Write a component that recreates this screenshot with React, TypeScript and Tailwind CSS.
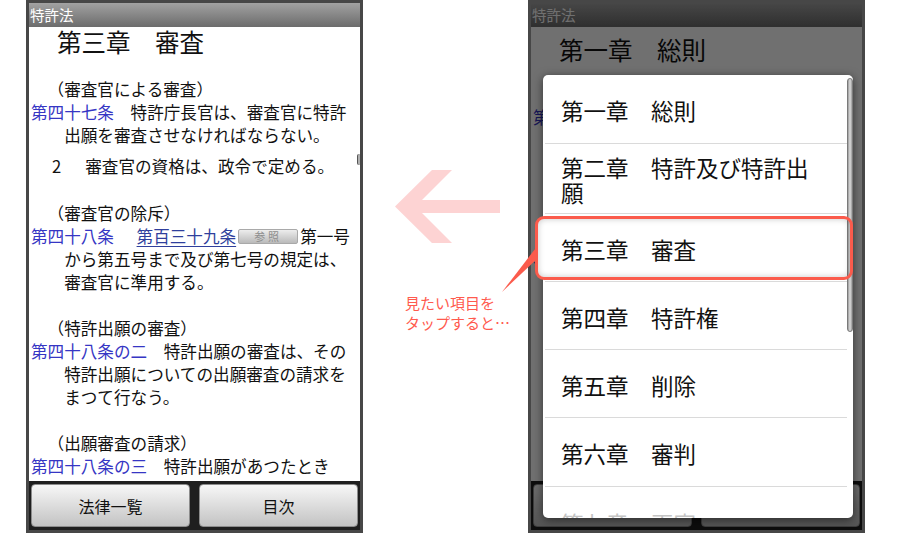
import React from 'react';

const linkBlue = 'text-[#3636c4]';

function TitleBar() {
  return (
    <div className="h-[24px] shrink-0 bg-gradient-to-b from-[#a2a2a2] to-[#6c6c6c] pl-[1px] text-[14.5px] leading-[24px] text-white">
      特許法
    </div>
  );
}

function BottomBar() {
  const btn =
    'flex flex-1 items-center justify-center rounded-[4px] border border-[#8c8c8c] bg-gradient-to-b from-[#f7f7f7] to-[#c3c3c3] text-[16px] text-[#111]';
  return (
    <div className="flex h-[49px] shrink-0 gap-[9px] bg-[#1f1f1f] px-[2px] py-[3px]">
      <button className={btn}>法律一覧</button>
      <button className={btn}>目次</button>
    </div>
  );
}

function LawPhone() {
  return (
    <div className="flex h-[533px] w-[337px] shrink-0 flex-col bg-[#474747] p-[3px]">
      <TitleBar />
      <div className="relative flex-1 overflow-hidden bg-white pl-[2px] text-[16.6px] leading-[23px] text-[#111]">
        <h1 className="h-[30px] pl-[26px] text-[24.5px] leading-[30px]">第三章　審査</h1>

        {/* 第四十七条 */}
        <div className="mt-[21px]">
          <p>　（審査官による審査）</p>
          <p>
            <span className={linkBlue}>第四十七条</span>　特許庁長官は、審査官に特許
          </p>
          <p className="pl-[2em]">出願を審査させなければならない。</p>
          <p className="mt-[8px] pl-[21px]">
            2<span className="ml-[24px]">審査官の資格は、政令で定める。</span>
          </p>
        </div>

        {/* 第四十八条 */}
        <div className="mt-[24px]">
          <p>　（審査官の除斥）</p>
          <p className="flex items-center whitespace-nowrap">
            <span className={linkBlue}>第四十八条</span>
            <span>　</span>
            <a className="ml-[6px] text-[#2f3f9c] underline decoration-1 underline-offset-[3px]">第百三十九条</a>
            <span className="ml-[2px] flex h-[15px] w-[60px] items-center justify-center rounded-[2px] border border-[#a9a9a9] bg-gradient-to-b from-[#ededed] to-[#bababa] text-[11px] leading-none tracking-[3px] text-[#8e8e8e]">
              参照
            </span>
            <span className="ml-[2px]">第一号</span>
          </p>
          <p className="pl-[2em]">から第五号まで及び第七号の規定は、</p>
          <p className="pl-[2em]">審査官に準用する。</p>
        </div>

        {/* 第四十八条の二 */}
        <div className="mt-[23px]">
          <p>　（特許出願の審査）</p>
          <p>
            <span className={linkBlue}>第四十八条の二</span>　特許出願の審査は、その
          </p>
          <p className="pl-[2em]">特許出願についての出願審査の請求を</p>
          <p className="pl-[2em]">まつて行なう。</p>
        </div>

        {/* 第四十八条の三 */}
        <div className="mt-[23px]">
          <p>　（出願審査の請求）</p>
          <p>
            <span className={linkBlue}>第四十八条の三</span>　特許出願があつたとき
          </p>
          <p className="pl-[2em] text-[#d4d4d4]">は、何人も、その日から三年以内に、</p>
        </div>

        <div className="absolute right-0 top-[127px] h-[11px] w-[3px] rounded-l-[2px] border-l border-[#555] bg-[#b0b0b0]" />
      </div>
      <BottomBar />
    </div>
  );
}

const chapters: { lines: string[]; h: string }[] = [
  { lines: ['第一章　総則'], h: 'h-[69px]' },
  { lines: ['第二章　特許及び特許出', '願'], h: 'h-[70px]' },
  { lines: ['第三章　審査'], h: 'h-[68px]' },
  { lines: ['第四章　特許権'], h: 'h-[68px]' },
  { lines: ['第五章　削除'], h: 'h-[68px]' },
  { lines: ['第六章　審判'], h: 'h-[69px]' },
];

function ChapterPhone() {
  return (
    <div className="relative flex h-[533px] w-[337px] shrink-0 flex-col bg-[#474747] p-[3px]">
      <TitleBar />
      <div className="relative flex-1 overflow-hidden bg-white pl-[2px] text-[16.6px] leading-[23px] text-[#111]">
        <h1 className="mt-[8px] h-[30px] pl-[26px] text-[24.5px] leading-[30px]">第一章　総則</h1>
        <div className="mt-[18px] whitespace-nowrap">
          <p>　（目的）</p>
          <p>
            <span className={linkBlue}>第一条</span>　この法律は、発明の保護及び
          </p>
          <p className="pl-[2em]">利用を図ることにより、発明を奨</p>
          <p className="pl-[2em]">励し、もつて産業の発達に寄与す</p>
          <p className="pl-[2em]">ることを目的とする。</p>
          <p className="mt-[23px]">　（定義）</p>
          <p>
            <span className={linkBlue}>第二条</span>　この法律で「発明」とは、
          </p>
          <p className="pl-[2em]">自然法則を利用した技術的思想の</p>
          <p className="pl-[2em]">創作のうち高度のものをいう。</p>
        </div>
      </div>
      <BottomBar />

      {/* dimmed background behind the dialog */}
      <div className="absolute inset-[3px] bg-black/[0.56]" />

      {/* chapter list dialog */}
      <div className="absolute left-[15px] top-[75px] h-[443px] w-[310px] overflow-hidden rounded-[5px] bg-white text-[22.5px] leading-[25px] text-[#111] shadow-[0_2px_10px_rgba(0,0,0,0.55)]">
        {chapters.map((c) => (
          <div
            key={c.lines[0]}
            className={`ml-[2px] mr-[6px] flex flex-col justify-center border-b border-[#dadada] pl-[16px] pt-[3px] ${c.h}`}
          >
            {c.lines.map((l) => (
              <span key={l}>{l}</span>
            ))}
          </div>
        ))}
        <div className="ml-[2px] mr-[6px] flex h-[69px] flex-col justify-center pl-[16px] pt-[3px] text-[#c4c4c4]">
          第七章　再審
        </div>
        <div className="absolute right-0 top-[3px] h-[254px] w-[6px] rounded-full border border-[#7a7a7a] bg-gradient-to-r from-[#9a9a9a] via-[#dedede] to-[#9a9a9a]" />
      </div>

      {/* highlight around the tapped item */}
      <div className="absolute left-[7px] top-[216px] h-[64px] w-[318px] rounded-[9px] border-[3px] border-[#fb5b4c] bg-[linear-gradient(90deg,#fff_6px,transparent_6px)] shadow-[inset_0_0_6px_rgba(0,0,0,0.22)]" />
    </div>
  );
}

export default function App() {
  return (
    <div className="relative flex h-[533px] w-[900px] overflow-hidden bg-white pl-[26px] font-['Noto_Sans_CJK_JP',sans-serif] [text-spacing-trim:space-all]">
      <LawPhone />

      <div className="flex w-[165px] shrink-0 flex-col">
        <svg className="ml-[32px] mt-[170px] h-[73px] w-[105px]" viewBox="0 0 105 73">
          <polygon
            points="0,36.5 37,0 57,0 27,30 105,30 105,43 27,43 57,73 37,73"
            fill="#fdd3d3"
          />
        </svg>
        <p className="ml-[42px] mt-[50px] text-[15px] leading-[20px] text-[#ff5a4e]">
          見たい項目を
          <br />
          タップすると…
        </p>
      </div>

      <ChapterPhone />

      <svg className="absolute left-[500px] top-[245px] z-10 h-[50px] w-[42px]" viewBox="0 0 42 50">
        <polygon points="2,47 35,4 38,13" fill="#fb5b4c" />
      </svg>
    </div>
  );
}
